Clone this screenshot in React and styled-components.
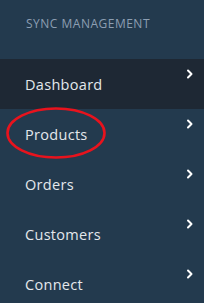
import React from 'react';
import styled, { createGlobalStyle } from 'styled-components';

const Global = createGlobalStyle`
    html, body {
        margin: 0;
        padding: 0;
        background: #233a4e;
    }
`;

const items = ['Dashboard', 'Products', 'Orders', 'Customers', 'Connect'];

const App = () => {
    return (
        <>
            <Global />
            <Sidebar>
                <Title>SYNC MANAGEMENT</Title>
                <Menu>
                    {items.map((name, i) => (
                        <Item key={name} active={i === 0}>
                            <Label>{name}</Label>
                            <Chevron viewBox="0 0 8 10">
                                <path d="M2 1.5 L5.5 5 L2 8.5" />
                            </Chevron>
                            {name === 'Products' && (
                                <Circle viewBox="0 0 100 52">
                                    <ellipse cx="50" cy="26" rx="48.5" ry="24.5" />
                                </Circle>
                            )}
                        </Item>
                    ))}
                </Menu>
            </Sidebar>
        </>
    );
};

const Sidebar = styled.nav`
    width: 204px;
    height: 303px;
    background: #233a4e;
    font-family: "Open Sans", sans-serif;
    overflow: hidden;
`;

const Title = styled.div`
    padding: 15px 0 0 26px;
    height: 43px;
    box-sizing: border-box;
    font-size: 12px;
    color: #8c9eb2;
    letter-spacing: 0.5px;
`;

const Menu = styled.ul`
    list-style: none;
    margin: 0;
    padding: 0;
    margin-top: 16px;
`;

const Item = styled.li`
    position: relative;
    display: flex;
    align-items: center;
    justify-content: space-between;
    height: 50px;
    padding: 0 10px 0 25px;
    background: ${p => (p.active ? '#1e2834' : 'transparent')};
`;

const Label = styled.span`
    font-size: 14.5px;
    letter-spacing: 0.3px;
    color: #e4e8ec;
`;

const Chevron = styled.svg`
    width: 8px;
    height: 10px;
    align-self: flex-start;
    margin-top: 10px;
    fill: none;
    stroke: #ffffff;
    stroke-width: 2;
    stroke-linecap: round;
    stroke-linejoin: round;
`;

const Circle = styled.svg`
    position: absolute;
    left: 6px;
    top: -2px;
    width: 100px;
    height: 52px;
    fill: none;
    stroke: #e8131d;
    stroke-width: 2.6;
    pointer-events: none;
`;

export default App;
